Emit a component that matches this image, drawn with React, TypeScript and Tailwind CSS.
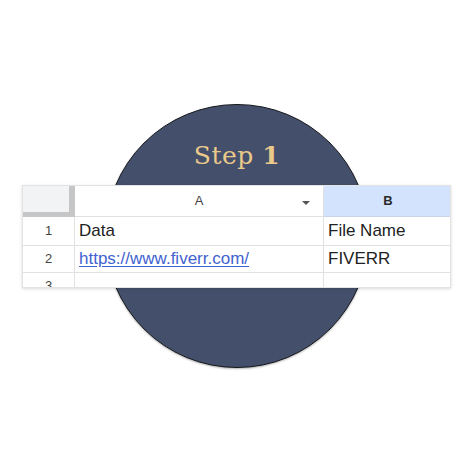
import React from "react";

const rowNumCls =
  "w-[52px] shrink-0 flex items-center justify-center text-[13px] text-[#444] border-r border-b border-[#e1e1e1]";
const cellA =
  "w-[249px] shrink-0 flex items-center px-[4px] text-[17px] text-[#222] border-r border-b border-[#e1e1e1]";
const cellB =
  "w-[128px] shrink-0 flex items-center px-[4px] text-[17px] text-[#222] border-b border-[#e1e1e1]";

export default function App() {
  return (
    <div className="relative w-[474px] h-[474px] bg-white overflow-hidden" style={{ fontFamily: '"Liberation Sans", Arial, sans-serif' }}>
      {/* circle */}
      <div className="absolute left-[105px] top-[104px] w-[264px] h-[264px] rounded-full bg-[#44506b] border-[1.5px] border-[#15171b] shadow-[0_1px_2px_rgba(0,0,0,0.3)]">
        <div
          className="mt-[36px] text-center text-[25px] leading-[30px] tracking-[0.5px] text-[#ebc98a]"
          style={{ fontFamily: '"DejaVu Serif", "Liberation Serif", serif' }}
        >
          Step <span className="font-bold">1</span>
        </div>
      </div>

      {/* sheet */}
      <div className="absolute left-[22px] top-[185px] w-[429px] h-[103px] overflow-hidden bg-white border border-[#e3e3e3] shadow-[0_1px_3px_rgba(0,0,0,0.15)]">
        {/* header */}
        <div className="flex h-[31px]">
          <div className="w-[46px] shrink-0 flex flex-col">
            <div className="h-[26px] bg-[#f1f3f4]" />
            <div className="h-[5px] bg-[#c6c6c6]" />
          </div>
          <div className="w-[6px] shrink-0 bg-[#c6c6c6]" />
          <div className="relative w-[249px] shrink-0 flex items-center justify-center text-[13px] text-[#444] border-r border-b border-[#e1e1e1]">
            A
            <span className="absolute right-[13px] top-[15px] w-0 h-0 border-l-[4px] border-r-[4px] border-t-[4px] border-l-transparent border-r-transparent border-t-[#555]" />
          </div>
          <div className="w-[128px] shrink-0 flex items-center justify-center text-[13px] font-bold text-[#2b2b2b] bg-[#d3e3fd] border-b border-[#c8d4e8]">
            B
          </div>
        </div>
        {/* row 1 */}
        <div className="flex h-[29px]">
          <div className={rowNumCls}>1</div>
          <div className={cellA}>Data</div>
          <div className={cellB}>File Name</div>
        </div>
        {/* row 2 */}
        <div className="flex h-[27px]">
          <div className={rowNumCls}>2</div>
          <div className={cellA}>
            <span className="text-[#3f63cf] underline underline-offset-2">https://www.fiverr.com/</span>
          </div>
          <div className={cellB}>FIVERR</div>
        </div>
        {/* row 3 */}
        <div className="flex h-[26px]">
          <div className={rowNumCls}>3</div>
          <div className={cellA}></div>
          <div className={cellB}></div>
        </div>
      </div>
    </div>
  );
}
